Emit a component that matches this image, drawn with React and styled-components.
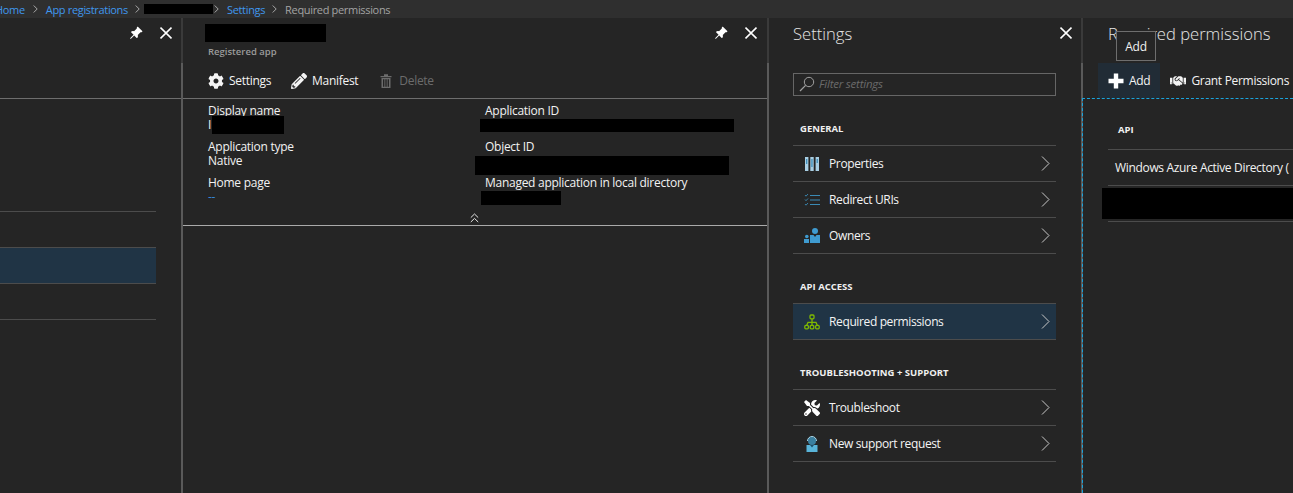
import React from "react";
import styled, { createGlobalStyle } from "styled-components";
import { BsPinAngleFill } from "react-icons/bs";
import { FaCog, FaPencilAlt, FaHandshake, FaTools } from "react-icons/fa";

const GlobalStyle = createGlobalStyle`
  html, body {
    margin: 0;
    padding: 0;
    background: #252525;
    font-family: "Open Sans", "Noto Sans", sans-serif;
    font-size: 12px;
    color: #f2f2f2;
  }
  * { box-sizing: border-box; }
`;

const Page = styled.div`
  width: 1293px;
  height: 493px;
  overflow: hidden;
  display: flex;
  flex-direction: column;
`;

const Breadcrumb = styled.nav`
  height: 18px;
  flex: none;
  display: flex;
  align-items: center;
  background: #2f2f2f;
  font-size: 11px;
  letter-spacing: -0.33px;
  margin-left: -5px;
  white-space: nowrap;
`;

const Crumb = styled.span`
  color: ${(p) => (p.$current ? "#a3a3a3" : "#3f97ee")};
`;

const CrumbChevron = styled.svg`
  width: 5px;
  height: 8px;
  margin: ${(p) => p.$margin || "0 8px"};
  flex: none;
`;

const Blades = styled.div`
  flex: 1;
  display: flex;
  min-height: 0;
`;

const Blade = styled.section`
  position: relative;
  width: ${(p) => p.$width || "auto"};
  flex: ${(p) => (p.$width ? "none" : "1")};
  min-width: 0;
  display: flex;
  flex-direction: column;
`;

const Divider = styled.div`
  width: 2px;
  flex: none;
  background: linear-gradient(#3a3a3a 45px, #5a5a5a 45px);
`;

const BladeHeader = styled.header`
  height: 45px;
  flex: none;
  display: flex;
  justify-content: space-between;
  padding: ${(p) => p.$padding || "6px 10px 0 22px"};
`;

const BladeTitle = styled.h2`
  margin: -1px 0 0;
  font-size: 16.6px;
  font-weight: 300;
  line-height: 21px;
  color: #e6e6e6;
  white-space: nowrap;
`;

const Subtitle = styled.div`
  font-size: 9.5px;
  font-weight: 600;
  line-height: 12px;
  margin: 4px 0 0 3px;
  color: #9b9b9b;
`;

const BladeActions = styled.div`
  display: flex;
  gap: 17px;
  padding-top: 2px;
  color: #fff;
  margin-left: auto;
`;

const Toolbar = styled.div`
  height: 36px;
  flex: none;
  display: flex;
  align-items: stretch;
  padding-left: 15px;
  border-bottom: 1px solid ${(p) => (p.$plain ? "transparent" : "#6e6e6e")};
  white-space: nowrap;
`;

const ToolButton = styled.div`
  display: flex;
  align-items: center;
  gap: 5px;
  padding: 0 10px;
  font-size: 12px;
  letter-spacing: -0.3px;
  color: ${(p) => (p.$disabled ? "#6c6c6c" : "#f4f4f4")};
  background: ${(p) => (p.$hover ? "#212c36" : "transparent")};
`;

const Essentials = styled.div`
  height: 127px;
  flex: none;
  display: flex;
  flex-direction: column;
  justify-content: space-between;
  border-bottom: 1px solid #aaaaaa;
`;

const EssentialsGrid = styled.div`
  display: grid;
  grid-template-columns: 277px 1fr;
  padding: 5px 0 0 25px;
`;

const Field = styled.div`
  height: 36px;
`;

const FieldLabel = styled.div`
  height: 14px;
  line-height: 13px;
  letter-spacing: -0.27px;
  color: #f2f2f2;
`;

const FieldValue = styled.div`
  height: 14px;
  line-height: 14px;
  display: flex;
  align-items: center;
  letter-spacing: -0.27px;
  color: ${(p) => p.$color || "#f2f2f2"};
`;

const Redacted = styled.span`
  display: block;
  flex: none;
  width: ${(p) => p.$w}px;
  height: ${(p) => p.$h}px;
  background: #000;
  margin: ${(p) => p.$top || 0}px 0 0 ${(p) => p.$left || 0}px;
`;

const Collapse = styled.div`
  height: 14px;
  display: flex;
  align-items: flex-end;
  justify-content: center;
  padding: 0 2px 2px 0;
`;

const Body = styled.div`
  padding: 0 25px 0 24px;
`;

const FilterBox = styled.div`
  height: 23px;
  margin-top: 10px;
  display: flex;
  align-items: center;
  gap: 4px;
  padding: 0 0 2px 5px;
  border: 1px solid #666;
  font-size: 11.5px;
  font-style: italic;
  letter-spacing: -0.22px;
  color: #6a6a6a;
`;

const SectionLabel = styled.div`
  padding: 26px 0 9px 7px;
  font-size: 9.5px;
  line-height: 14px;
  font-weight: 700;
  color: #f0f0f0;
`;

const Rows = styled.div`
  border-top: 1px solid #4c4c4c;
`;

const Row = styled.div`
  height: 36px;
  display: flex;
  align-items: center;
  gap: 9px;
  padding: 0 6px 0 11px;
  border-bottom: 1px solid #4c4c4c;
  background: ${(p) => (p.$selected ? "#203445" : "transparent")};
  letter-spacing: -0.37px;
  color: #f4f4f4;
`;

const RowText = styled.span`
  flex: 1;
`;

const IconSlot = styled.svg`
  width: 16px;
  height: 16px;
  flex: none;
`;

const RowChevron = styled.svg`
  width: 9px;
  height: 15px;
  flex: none;
`;

const Tooltip = styled.div`
  position: absolute;
  left: 33px;
  top: 13px;
  width: 40px;
  height: 30px;
  display: flex;
  align-items: center;
  justify-content: center;
  background: #252525;
  border: 1px solid #6e6e6e;
  color: #f2f2f2;
  letter-spacing: -0.2px;
`;

const ActiveArea = styled.div`
  flex: 1;
  margin: -1px 0 0 -1px;
  padding-left: 25px;
  border-top: 1px dashed #1aa3dc;
  border-left: 1px dashed #1aa3dc;
`;

const TableHead = styled.div`
  height: 51px;
  display: flex;
  align-items: center;
  padding: 10px 0 0 10px;
  font-size: 9.5px;
  font-weight: 700;
  border-bottom: 1px solid #4c4c4c;
`;

const TableRow = styled.div`
  height: 36px;
  display: flex;
  align-items: center;
  padding-left: ${(p) => p.$pad ?? 7}px;
  border-bottom: 1px solid #4c4c4c;
  letter-spacing: -0.33px;
  white-space: nowrap;
`;

const SideList = styled.div`
  margin: 112px 25px 0 0;
`;

const Close = () => (
  <svg width="12" height="14" viewBox="0 0 12 14">
    <path d="M0.5 1.5 11.5 12.5M11.5 1.5 0.5 12.5" stroke="#fff" strokeWidth="1.6" fill="none" />
  </svg>
);

const Actions = ({ pin = true }) => (
  <BladeActions>
    {pin && <BsPinAngleFill size={14} />}
    <Close />
  </BladeActions>
);

const Chevron = () => (
  <RowChevron viewBox="0 0 9 15">
    <path d="M1 0.5 8 7.5 1 14.5" stroke="#c8c8c8" strokeWidth="1" fill="none" />
  </RowChevron>
);

const Sep = ({ margin }) => (
  <CrumbChevron viewBox="0 0 5 8" $margin={margin}>
    <path d="M0.7 0.5 4.2 4 0.7 7.5" stroke="#a8a8a8" strokeWidth="1" fill="none" />
  </CrumbChevron>
);

const PropertiesIcon = () => (
  <IconSlot viewBox="0 0 16 16">
    <rect x="1" y="1" width="3.4" height="14" fill="#a9cfe4" />
    <rect x="6.3" y="1" width="3.4" height="14" fill="#a9cfe4" />
    <rect x="11.6" y="1" width="3.4" height="14" fill="#a9cfe4" />
    <rect x="2" y="3" width="1.3" height="5" fill="#3f8fbb" />
    <rect x="7.3" y="3" width="1.3" height="8" fill="#3f8fbb" />
    <rect x="12.6" y="3" width="1.3" height="4" fill="#3f8fbb" />
  </IconSlot>
);

const RedirectIcon = () => (
  <IconSlot viewBox="0 0 16 16">
    <g stroke="#3a8ab5" fill="none">
      <path d="M6 3.5H16M6 8H16M6 12.5H16" strokeWidth="1.2" />
      <path d="M1 3 2 4.2 4 2M1 7.5 2 8.7 4 6.5M1 12 2 13.2 4 11" strokeWidth="0.9" />
    </g>
  </IconSlot>
);

const OwnersIcon = () => (
  <IconSlot viewBox="0 0 16 16">
    <circle cx="11" cy="3" r="3" fill="#3f9bd0" />
    <path d="M6 7H9.5L11 9 12.5 7H16V15H6Z" fill="#3f9bd0" />
    <circle cx="2.8" cy="8.5" r="1.8" fill="#3f9bd0" />
    <path d="M0 11H5V15H0Z" fill="#3f9bd0" />
  </IconSlot>
);

const NetworkIcon = () => (
  <IconSlot viewBox="0 0 16 16">
    <g stroke="#7fb900" strokeWidth="1.3" fill="none">
      <rect x="6" y="1" width="4" height="3.8" rx="1" />
      <rect x="0.8" y="11.4" width="3.6" height="3.4" rx="1" />
      <rect x="6.2" y="11.4" width="3.6" height="3.4" rx="1" />
      <rect x="11.6" y="11.4" width="3.6" height="3.4" rx="1" />
      <path d="M8 4.8V11.4M2.6 11.4 4 8.4H12L13.4 11.4" />
    </g>
  </IconSlot>
);

const SupportIcon = () => (
  <IconSlot viewBox="0 0 16 16">
    <path d="M2.5 9H13.5V16H2.5Z" fill="#59b4d9" />
    <circle cx="8" cy="5" r="4" fill="#3a7f9f" />
    <path d="M3.5 5a4.5 4.5 0 0 1 9 0" stroke="#a9d8ec" strokeWidth="1" fill="none" />
    <path d="M6 9h4l-2 2.5Z" fill="#1d4f68" />
  </IconSlot>
);

const TrashIcon = () => (
  <IconSlot viewBox="0 0 16 16">
    <g fill="#6c6c6c">
      <path d="M2.5 3H13.5V4.2H2.5ZM6 1.2H10V3H6Z" />
      <path d="M3.5 5H12.5V15H3.5ZM5 6.2V13.8H6.4V6.2ZM7.3 6.2V13.8H8.7V6.2ZM9.6 6.2V13.8H11V6.2Z" fillRule="evenodd" />
    </g>
  </IconSlot>
);

const PlusIcon = () => (
  <IconSlot viewBox="0 0 16 16">
    <path d="M5.8 0.5H10.2V5.8H15.5V10.2H10.2V15.5H5.8V10.2H0.5V5.8H5.8Z" fill="#fff" />
  </IconSlot>
);

const SearchIcon = () => (
  <svg width="16" height="16" viewBox="0 0 16 16">
    <circle cx="10" cy="6" r="4.7" stroke="#a0a0a0" fill="none" />
    <path d="M6.6 9.4 1 15" stroke="#a0a0a0" strokeWidth="1.3" />
  </svg>
);

const CollapseIcon = () => (
  <svg width="9" height="10" viewBox="0 0 9 10">
    <path d="M0.8 4.6 4.5 1 8.2 4.6M0.8 9 4.5 5.4 8.2 9" stroke="#e8e8e8" fill="none" />
  </svg>
);

const settingsGroups = [
  {
    label: "GENERAL",
    rows: [
      { text: "Properties", icon: <PropertiesIcon /> },
      { text: "Redirect URIs", icon: <RedirectIcon /> },
      { text: "Owners", icon: <OwnersIcon /> },
    ],
  },
  {
    label: "API ACCESS",
    rows: [{ text: "Required permissions", icon: <NetworkIcon />, selected: true }],
  },
  {
    label: "TROUBLESHOOTING + SUPPORT",
    rows: [
      { text: "Troubleshoot", icon: <FaTools size={16} color="#fff" style={{ flex: "none" }} /> },
      { text: "New support request", icon: <SupportIcon /> },
    ],
  },
];

export default function App() {
  return (
    <Page>
      <GlobalStyle />
      <Breadcrumb>
        <Crumb>Home</Crumb>
        <Sep />
        <Crumb>App registrations</Crumb>
        <Sep margin="0 4px 0 7px" />
        <Redacted $w={69} $h={10} />
        <Sep margin="0 8px 0 1px" />
        <Crumb>Settings</Crumb>
        <Sep margin="0 8px 0 7px" />
        <Crumb $current>Required permissions</Crumb>
      </Breadcrumb>
      <Blades>
        <Blade $width="181px">
          <BladeHeader $padding="6px 9px 0 22px">
            <Actions />
          </BladeHeader>
          <Toolbar />
          <SideList>
            <Rows>
              <Row />
              <Row $selected />
              <Row />
            </Rows>
          </SideList>
        </Blade>
        <Divider />
        <Blade $width="584px">
          <BladeHeader>
            <div>
              <Redacted $w={121} $h={18} />
              <Subtitle>Registered app</Subtitle>
            </div>
            <Actions />
          </BladeHeader>
          <Toolbar>
            <ToolButton>
              <FaCog size={16} />
              Settings
            </ToolButton>
            <ToolButton>
              <FaPencilAlt size={16} />
              Manifest
            </ToolButton>
            <ToolButton $disabled>
              <TrashIcon />
              Delete
            </ToolButton>
          </Toolbar>
          <Essentials>
            <EssentialsGrid>
              <Field>
                <FieldLabel>Display name</FieldLabel>
                <FieldValue>
                  I
                  <Redacted $w={72} $h={18} $left={1} />
                </FieldValue>
              </Field>
              <Field>
                <FieldLabel>Application ID</FieldLabel>
                <FieldValue>
                  <Redacted $w={254} $h={13} $left={-5} $top={1} />
                </FieldValue>
              </Field>
              <Field>
                <FieldLabel>Application type</FieldLabel>
                <FieldValue>Native</FieldValue>
              </Field>
              <Field>
                <FieldLabel>Object ID</FieldLabel>
                <FieldValue>
                  <Redacted $w={254} $h={19} $left={-10} $top={9} />
                </FieldValue>
              </Field>
              <Field>
                <FieldLabel>Home page</FieldLabel>
                <FieldValue $color="#3585d8">--</FieldValue>
              </Field>
              <Field>
                <FieldLabel>Managed application in local directory</FieldLabel>
                <FieldValue>
                  <Redacted $w={80} $h={14} $left={-4} $top={2} />
                </FieldValue>
              </Field>
            </EssentialsGrid>
            <Collapse>
              <CollapseIcon />
            </Collapse>
          </Essentials>
        </Blade>
        <Divider />
        <Blade $width="312px">
          <BladeHeader $padding="6px 9px 0 24px">
            <BladeTitle>Settings</BladeTitle>
            <Actions pin={false} />
          </BladeHeader>
          <Body>
            <FilterBox>
              <SearchIcon />
              Filter settings
            </FilterBox>
            {settingsGroups.map((group) => (
              <div key={group.label}>
                <SectionLabel>{group.label}</SectionLabel>
                <Rows>
                  {group.rows.map((row) => (
                    <Row key={row.text} $selected={row.selected}>
                      {row.icon}
                      <RowText>{row.text}</RowText>
                      <Chevron />
                    </Row>
                  ))}
                </Rows>
              </div>
            ))}
          </Body>
        </Blade>
        <Divider />
        <Blade>
          <BladeHeader $padding="6px 0 0 25px">
            <BladeTitle>Required permissions</BladeTitle>
          </BladeHeader>
          <Toolbar $plain>
            <ToolButton $hover>
              <PlusIcon />
              Add
            </ToolButton>
            <ToolButton>
              <FaHandshake size={16} />
              Grant Permissions
            </ToolButton>
          </Toolbar>
          <ActiveArea>
            <TableHead>API</TableHead>
            <TableRow>Windows Azure Active Directory (</TableRow>
            <TableRow $pad={0}>
              <Redacted $w={200} $h={31} $left={-6} />
            </TableRow>
          </ActiveArea>
          <Tooltip>Add</Tooltip>
        </Blade>
      </Blades>
    </Page>
  );
}
